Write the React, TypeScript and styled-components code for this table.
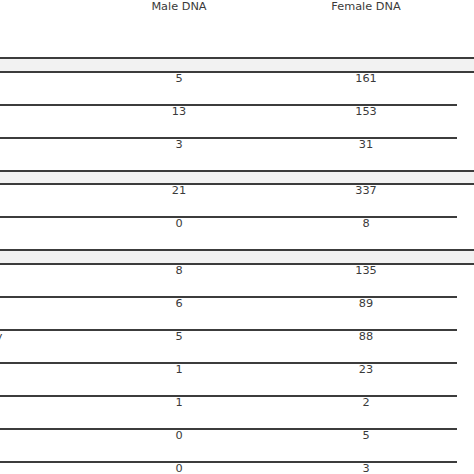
import styled, { createGlobalStyle } from "styled-components";

const GlobalStyle = createGlobalStyle`
  html, body {
    margin: 0;
    padding: 0;
    background: #ffffff;
    overflow: hidden;
  }
  body {
    font-family: "DejaVu Sans", "Liberation Sans", sans-serif;
    color: #3a3a3a;
  }
`;

const Table = styled.div`
  display: flex;
  flex-direction: column;
  margin-left: -126px;
  width: 606px;
`;

const Columns = styled.div`
  display: grid;
  grid-template-columns: 228px 154px 220px;
  font-size: 11.3px;
`;

const HeaderRow = styled(Columns)`
  height: 57px;
  line-height: 13px;
`;

const HeadCell = styled.div`
  text-align: center;
  white-space: nowrap;
`;

const Band = styled.div`
  width: 606px;
  height: 11.5px;
  background: #f2f2f2;
  border-top: 2px solid #3c3c3c;
  border-bottom: 2px solid #3c3c3c;
`;

const Row = styled(Columns)<{ $last?: boolean }>`
  width: 583px;
  height: 31px;
  line-height: 11px;
  border-bottom: ${(p) => (p.$last ? "none" : "2px solid #3c3c3c")};
`;

const Label = styled.div`
  padding-left: 4px;
  white-space: nowrap;
  text-align: left;
`;

const Value = styled.div`
  text-align: center;
  white-space: nowrap;
`;

type Item = { label: string; male: number; female: number };

const sections: Item[][] = [
  [
    { label: "", male: 5, female: 161 },
    { label: "", male: 13, female: 153 },
    { label: "", male: 3, female: 31 },
  ],
  [
    { label: "", male: 21, female: 337 },
    { label: "", male: 0, female: 8 },
  ],
  [
    { label: "", male: 8, female: 135 },
    { label: "", male: 6, female: 89 },
    { label: "Positive family history", male: 5, female: 88 },
    { label: "", male: 1, female: 23 },
    { label: "", male: 1, female: 2 },
    { label: "", male: 0, female: 5 },
    { label: "", male: 0, female: 3 },
  ],
];

export default function App() {
  return (
    <>
      <GlobalStyle />
      <Table>
        <HeaderRow>
          <HeadCell />
          <HeadCell>Male DNA</HeadCell>
          <HeadCell>Female DNA</HeadCell>
        </HeaderRow>
        {sections.map((rows, s) => (
          <div key={s}>
            <Band />
            {rows.map((r, i) => (
              <Row key={i} $last={i === rows.length - 1}>
                <Label>{r.label}</Label>
                <Value>{r.male}</Value>
                <Value>{r.female}</Value>
              </Row>
            ))}
          </div>
        ))}
      </Table>
    </>
  );
}
